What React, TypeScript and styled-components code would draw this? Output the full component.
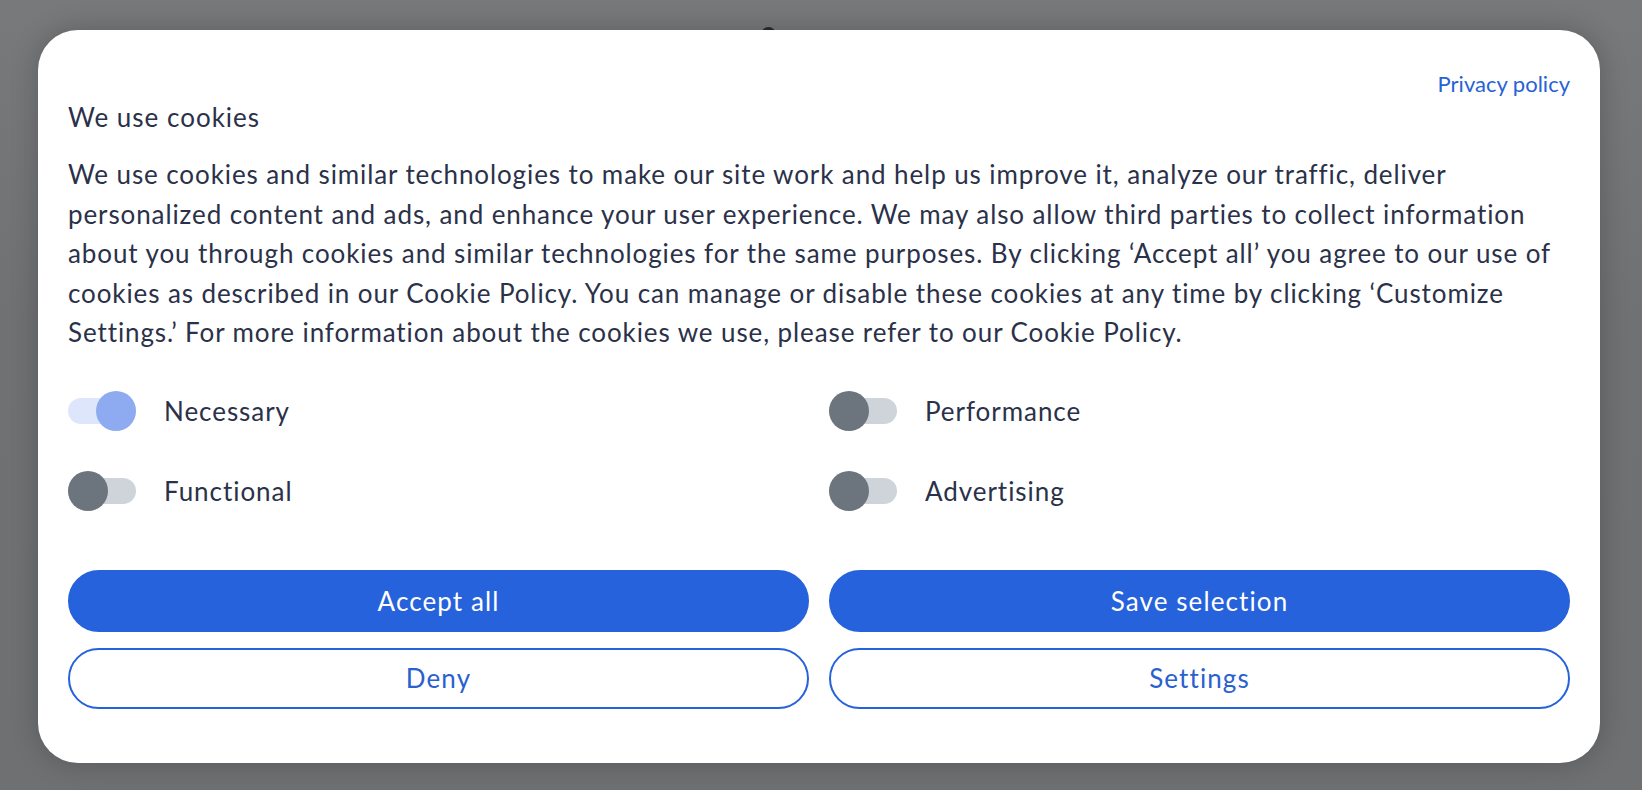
import React, { useState } from "react";
import styled, { createGlobalStyle } from "styled-components";

const GlobalStyle = createGlobalStyle`
  html, body {
    margin: 0;
    padding: 0;
    background: #737476;
  }
  body {
    font-family: "Lato", "Noto Sans", sans-serif;
    -webkit-font-smoothing: antialiased;
  }
`;

type Category = {
  id: string;
  label: string;
  locked?: boolean;
};

const categories: Category[] = [
  { id: "necessary", label: "Necessary", locked: true },
  { id: "performance", label: "Performance" },
  { id: "functional", label: "Functional" },
  { id: "advertising", label: "Advertising" },
];

// the notice keeps the same line breaks as the design
const notice = [
  "We use cookies and similar technologies to make our site work and help us improve it, analyze our traffic, deliver",
  "personalized content and ads, and enhance your user experience. We may also allow third parties to collect information",
  "about you through cookies and similar technologies for the same purposes. By clicking ‘Accept all’ you agree to our use of",
  "cookies as described in our Cookie Policy. You can manage or disable these cookies at any time by clicking ‘Customize",
  "Settings.’ For more information about the cookies we use, please refer to our Cookie Policy.",
];

export default function App() {
  const [enabled, setEnabled] = useState<Record<string, boolean>>({
    necessary: true,
    performance: false,
    functional: false,
    advertising: false,
  });

  const flip = (c: Category) => {
    if (c.locked) return;
    setEnabled((prev) => ({ ...prev, [c.id]: !prev[c.id] }));
  };

  return (
    <>
      <GlobalStyle />
      <Backdrop>
        <PageDot />
        <Modal>
          <TopRow>
            <PolicyLink href="#">Privacy policy</PolicyLink>
          </TopRow>
          <Title>We use cookies</Title>
          <Body>
            {notice.map((line, i) => (
              <React.Fragment key={i}>
                {line}
                {i < notice.length - 1 && <br />}
              </React.Fragment>
            ))}
          </Body>

          <ToggleGrid>
            {categories.map((c) => (
              <ToggleRow key={c.id} onClick={() => flip(c)}>
                <Switch $on={enabled[c.id]}>
                  <Knob $on={enabled[c.id]} />
                </Switch>
                <ToggleLabel>{c.label}</ToggleLabel>
              </ToggleRow>
            ))}
          </ToggleGrid>

          <ButtonGrid>
            <Button $variant="solid">Accept all</Button>
            <Button $variant="solid">Save selection</Button>
            <Button $variant="outline">Deny</Button>
            <Button $variant="outline">Settings</Button>
          </ButtonGrid>
        </Modal>
      </Backdrop>
    </>
  );
}

const Backdrop = styled.div`
  position: relative;
  min-height: 100vh;
  box-sizing: border-box;
  padding: 30px 42px 27px 38px;
  background: linear-gradient(180deg, #78797b 0%, #707173 40%, #6f7072 100%);
`;

const PageDot = styled.div`
  position: absolute;
  top: 27px;
  left: 761px;
  width: 15px;
  height: 15px;
  border-radius: 50%;
  background: #2a2b2d;
`;

const Modal = styled.div`
  position: relative;
  background: #ffffff;
  border-radius: 40px;
  padding: 40px 30px 54px 30px;
  box-shadow: 0 0 28px rgba(0, 0, 0, 0.22);
  color: #2a3149;
`;

const TopRow = styled.div`
  display: flex;
  justify-content: flex-end;
`;

const PolicyLink = styled.a`
  font-size: 22px;
  line-height: 28px;
  color: #2862d6;
  text-decoration: none;
`;

const Title = styled.h2`
  margin: 0;
  font-size: 26px;
  line-height: 39px;
  font-weight: 400;
  letter-spacing: 1px;
`;

const Body = styled.p`
  margin: 18px 0 0;
  font-size: 26px;
  line-height: 39.5px;
  letter-spacing: 0.9px;
  white-space: nowrap;
`;

const ToggleGrid = styled.div`
  margin-top: 38px;
  display: grid;
  grid-template-columns: 1fr 1fr;
  column-gap: 20px;
  row-gap: 40px;
`;

const ToggleRow = styled.div`
  display: flex;
  align-items: center;
  height: 40px;
  cursor: pointer;
`;

const Switch = styled.div<{ $on?: boolean }>`
  position: relative;
  flex: none;
  width: 68px;
  height: 26px;
  border-radius: 13px;
  background: ${(p) => (p.$on ? "#dde6fb" : "#ced4da")};
`;

const Knob = styled.span<{ $on?: boolean }>`
  position: absolute;
  top: -7px;
  left: ${(p) => (p.$on ? "28px" : "0")};
  width: 40px;
  height: 40px;
  border-radius: 50%;
  background: ${(p) => (p.$on ? "#8eabf1" : "#6c757d")};
`;

const ToggleLabel = styled.span`
  margin-left: 28px;
  font-size: 26px;
  line-height: 40px;
  letter-spacing: 0.95px;
`;

const ButtonGrid = styled.div`
  margin-top: 59px;
  display: grid;
  grid-template-columns: 1fr 1fr;
  column-gap: 20px;
  row-gap: 16px;
`;

const Button = styled.button<{ $variant: "solid" | "outline" }>`
  box-sizing: border-box;
  height: ${(p) => (p.$variant === "solid" ? "62px" : "61px")};
  border-radius: 31px;
  font-family: inherit;
  font-size: 26px;
  letter-spacing: 1.1px;
  cursor: pointer;
  border: 2px solid #2662dc;
  background: ${(p) => (p.$variant === "solid" ? "#2662dc" : "#ffffff")};
  color: ${(p) => (p.$variant === "solid" ? "#ffffff" : "#2a60cf")};
`;
